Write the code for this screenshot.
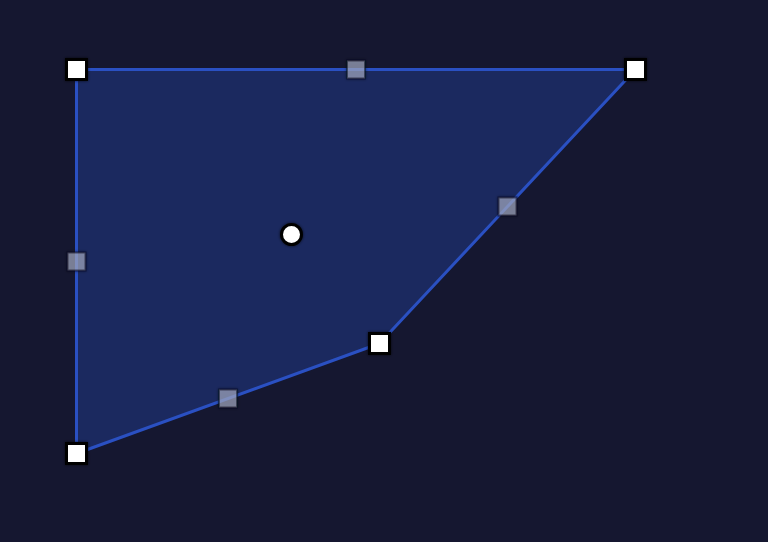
const vertices: [number, number][] = [
  [76.5, 69.5],
  [635.5, 69.5],
  [379.5, 343.5],
  [76.5, 453.5],
];

const center: [number, number] = [291.5, 234.5];

export default function App() {
  const midpoints = vertices.map((v, i) => {
    const n = vertices[(i + 1) % vertices.length];
    return [(v[0] + n[0]) / 2, (v[1] + n[1]) / 2] as [number, number];
  });

  return (
    <div className="h-[542px] w-[768px] overflow-hidden bg-[#151730]">
      <svg width="768" height="542" viewBox="0 0 768 542" className="block">
        <defs>
          <filter id="glow" x="-50%" y="-50%" width="200%" height="200%">
            <feDropShadow dx="0" dy="0" stdDeviation="1.5" floodColor="#000" floodOpacity="0.7" />
          </filter>
        </defs>

        {/* shape */}
        <polygon
          points={vertices.map((p) => p.join(",")).join(" ")}
          fill="#1b295f"
          stroke="#2a50c2"
          strokeWidth="3"
          strokeLinejoin="round"
        />

        {/* edge midpoints */}
        {midpoints.map(([x, y], i) => (
          <rect
            key={`m${i}`}
            x={x - 9}
            y={y - 9}
            width="18"
            height="18"
            fill="#b4bbd6"
            fillOpacity="0.55"
            stroke="#0b0d1e"
            strokeOpacity="0.5"
            strokeWidth="2"
            filter="url(#glow)"
          />
        ))}

        {/* vertices */}
        {vertices.map(([x, y], i) => (
          <rect
            key={`v${i}`}
            x={x - 10}
            y={y - 10}
            width="20"
            height="20"
            fill="#ffffff"
            stroke="#000000"
            strokeWidth="3"
            filter="url(#glow)"
          />
        ))}

        {/* center */}
        <circle
          cx={center[0]}
          cy={center[1]}
          r="10"
          fill="#ffffff"
          stroke="#000000"
          strokeWidth="3"
          filter="url(#glow)"
        />
      </svg>
    </div>
  );
}
